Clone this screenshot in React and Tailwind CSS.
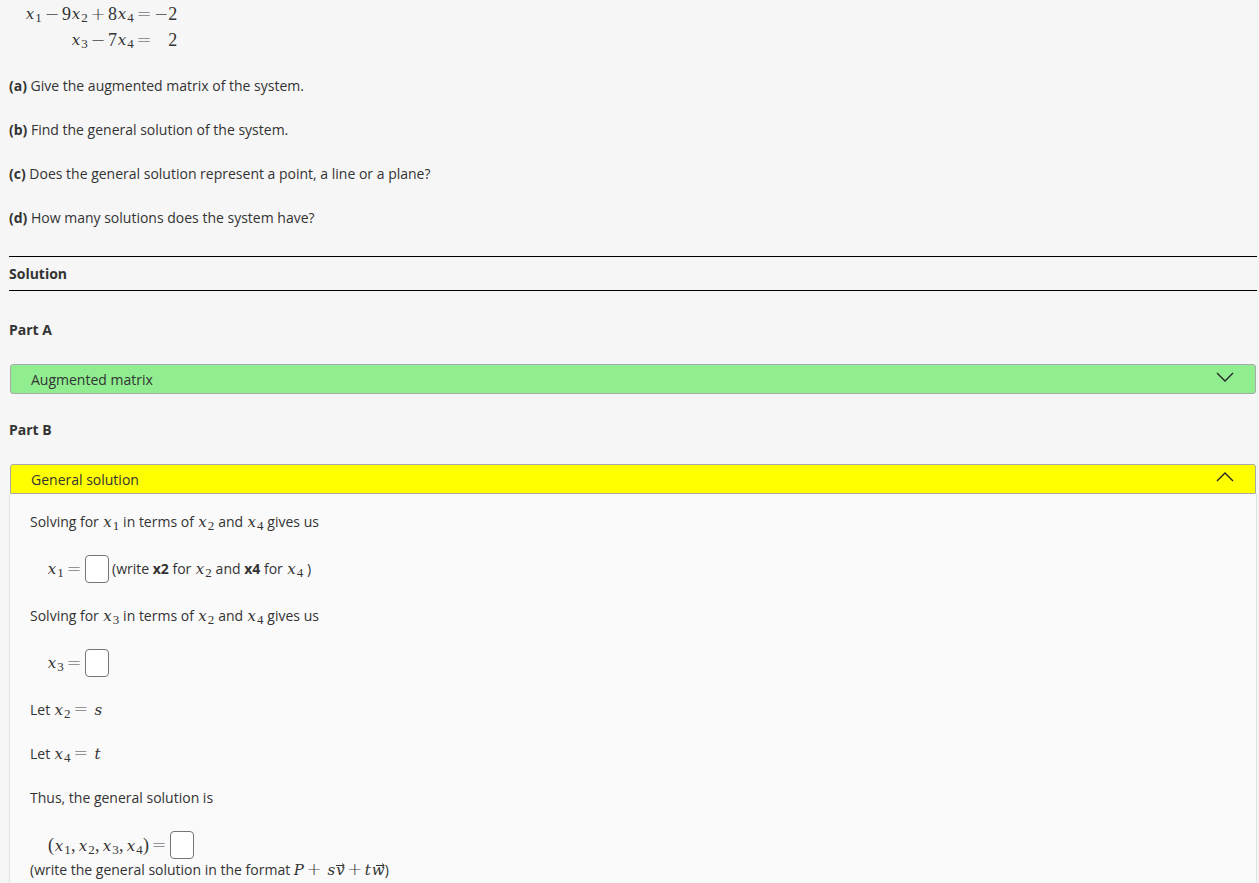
import { useState } from "react";

function X({ n }) {
  return (
    <span className="whitespace-nowrap leading-none">
      <i className="inline-block w-[10px] text-center font-['DejaVu_Serif',serif] text-[15px] leading-none">
        x
      </i>
      <span className="relative top-[3px] inline-block w-[7px] text-center font-['Liberation_Serif',serif] text-[13px] leading-none">
        {n}
      </span>
    </span>
  );
}

function Op({ children }) {
  return (
    <span className="inline-block w-5 text-center font-['DejaVu_Sans',sans-serif] text-[18px] leading-none font-extralight text-[#444]">
      {children}
    </span>
  );
}

function Num({ children }) {
  return (
    <span className="inline-block w-[9px] text-center font-['Liberation_Serif',serif] text-[18px] leading-none">
      {children}
    </span>
  );
}

function Letter({ children }) {
  return (
    <i className="font-['DejaVu_Serif',serif] text-[15px] leading-none">
      {children}
    </i>
  );
}

function Vec({ children }) {
  return (
    <span className="relative ml-px inline-block leading-none">
      <Letter>{children}</Letter>
      <svg
        viewBox="0 0 9 5"
        className="absolute top-0 right-0 h-[5px] w-[9px]"
        fill="none"
        stroke="currentColor"
      >
        <path d="M0 2.5H8M6 0.5L8.3 2.5L6 4.5" />
      </svg>
    </span>
  );
}

function Answer({ label, value, onChange }) {
  return (
    <input
      type="text"
      aria-label={label}
      value={value}
      onChange={(e) => onChange(e.target.value)}
      className="mr-[3px] ml-px h-7 w-6 shrink-0 rounded-[4px] border border-[#767676] bg-white px-1 text-sm"
    />
  );
}

function PanelHeader({ title, open, onToggle, color }) {
  return (
    <button
      type="button"
      aria-expanded={open}
      onClick={onToggle}
      className={`flex h-[30px] w-full items-center justify-between border border-[#a9a9a9] pr-[21px] pl-5 text-left ${
        open ? "rounded-t-[3px]" : "rounded-[3px]"
      } ${color}`}
    >
      <span className="pt-px">{title}</span>
      <svg
        viewBox="0 0 18 10"
        className="mb-1 h-[10px] w-[18px]"
        fill="none"
        stroke="#222"
        strokeWidth="1.3"
      >
        <path d={open ? "M1 9L9 1L17 9" : "M1 1L9 9L17 1"} />
      </svg>
    </button>
  );
}

export default function App() {
  const [openA, setOpenA] = useState(false);
  const [openB, setOpenB] = useState(true);
  const [answers, setAnswers] = useState({ x1: "", x3: "", general: "" });

  const setAnswer = (key) => (value) =>
    setAnswers({ ...answers, [key]: value });

  return (
    <main className="flex min-h-screen flex-col bg-[#f6f6f6] pt-px pr-[2px] pl-[9px] font-['Open_Sans',sans-serif] text-sm leading-[22px] text-[#333]">
      {/* System of equations */}
      <div className="ml-4 grid w-fit grid-cols-[auto_auto_auto] text-right">
        <div className="flex h-[26px] items-center justify-end">
          <X n="1" />
          <Op>−</Op>
          <Num>9</Num>
          <X n="2" />
          <Op>+</Op>
          <Num>8</Num>
          <X n="4" />
        </div>
        <div className="flex h-[26px] items-center">
          <Op>=</Op>
        </div>
        <div className="flex h-[26px] items-center justify-end">
          <span className="font-['DejaVu_Sans',sans-serif] text-[17px] leading-none font-extralight text-[#444]">
            −
          </span>
          <Num>2</Num>
        </div>
        <div className="flex h-[26px] items-center justify-end">
          <X n="3" />
          <Op>−</Op>
          <Num>7</Num>
          <X n="4" />
        </div>
        <div className="flex h-[26px] items-center">
          <Op>=</Op>
        </div>
        <div className="flex h-[26px] items-center justify-end">
          <Num>2</Num>
        </div>
      </div>

      <div className="mt-[22px] space-y-[22px]">
        <p>
          <b>(a)</b> Give the augmented matrix of the system.
        </p>
        <p>
          <b>(b)</b> Find the general solution of the system.
        </p>
        <p>
          <b>(c)</b> Does the general solution represent a point, a line or a
          plane?
        </p>
        <p>
          <b>(d)</b> How many solutions does the system have?
        </p>
      </div>

      <h2 className="mt-[27px] border-y border-black py-[6px] leading-[21px] font-bold">
        Solution
      </h2>

      <h3 className="mt-7 font-bold">Part A</h3>
      <div className="mt-[23px] pr-px pl-px">
        <PanelHeader
          title="Augmented matrix"
          open={openA}
          onToggle={() => setOpenA(!openA)}
          color="bg-[#90ee90]"
        />
      </div>

      <h3 className="mt-[25px] font-bold">Part B</h3>
      <div className="mt-[23px] pr-px pl-px">
        <PanelHeader
          title="General solution"
          open={openB}
          onToggle={() => setOpenB(!openB)}
          color="bg-[#ffff00]"
        />
      </div>

      {openB && (
        <section className="flex-1 border-x border-[#e2e2e2] bg-[#fafafa] px-5 pt-[17px]">
          <p className="h-[22px]">
            Solving for <X n="1" /> in terms of <X n="2" /> and <X n="4" />{" "}
            gives us
          </p>
          <div className="mt-[22px] ml-[17px] flex h-7 items-center">
            <X n="1" />
            <Op>=</Op>
            <Answer
              label="x1"
              value={answers.x1}
              onChange={setAnswer("x1")}
            />
            <p className="h-[22px]">
              (write <b>x2</b> for <X n="2" /> and <b>x4</b> for <X n="4" /> )
            </p>
          </div>
          <p className="mt-[22px] h-[22px]">
            Solving for <X n="3" /> in terms of <X n="2" /> and <X n="4" />{" "}
            gives us
          </p>
          <div className="mt-[22px] ml-[17px] flex h-7 items-center">
            <X n="3" />
            <Op>=</Op>
            <Answer
              label="x3"
              value={answers.x3}
              onChange={setAnswer("x3")}
            />
          </div>
          <p className="mt-[22px] h-[22px]">
            Let <X n="2" />
            <Op>=</Op> <Letter>s</Letter>
          </p>
          <p className="mt-[22px] h-[22px]">
            Let <X n="4" />
            <Op>=</Op> <Letter>t</Letter>
          </p>
          <p className="mt-[22px]">Thus, the general solution is</p>
          <div className="mt-[22px] ml-[18px] flex h-7 items-center font-['Liberation_Serif',serif] text-[18px]">
            <span>(</span>
            <X n="1" />
            <span className="w-[7px]">,</span>
            <X n="2" />
            <span className="w-[7px]">,</span>
            <X n="3" />
            <span className="w-[7px]">,</span>
            <X n="4" />
            <span>)</span>
            <Op>=</Op>
            <Answer
              label="General solution"
              value={answers.general}
              onChange={setAnswer("general")}
            />
          </div>
          <p className="h-[22px]">
            (write the general solution in the format{" "}
            <Letter>P</Letter>
            <Op>+</Op> <Letter>s</Letter>
            <Vec>v</Vec>
            <Op>+</Op>
            <Letter>t</Letter>
            <Vec>w</Vec>)
          </p>
        </section>
      )}
    </main>
  );
}
